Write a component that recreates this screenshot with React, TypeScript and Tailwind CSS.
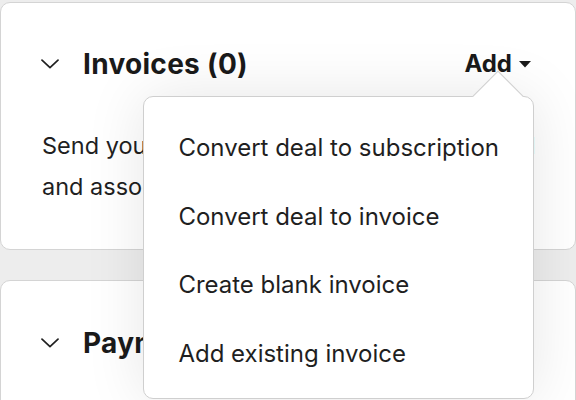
import React from 'react';

const MENU_ITEMS = [
  'Convert deal to subscription',
  'Convert deal to invoice',
  'Create blank invoice',
  'Add existing invoice',
];

function Chevron() {
  return (
    <svg width="18" height="10" viewBox="0 0 18 10" fill="none" className="shrink-0">
      <path d="M1 1.2 L9 8.6 L17 1.2" stroke="#1f1f1f" strokeWidth="1.7" strokeLinecap="round" strokeLinejoin="round" />
    </svg>
  );
}

function AddMenu() {
  return (
    <div className="relative">
      <button className="flex items-center gap-[7px] text-[24px] font-bold text-[#1a1a1a] leading-none">
        Add
        <svg width="12" height="7" viewBox="0 0 12 7">
          <path d="M0 0 H12 L6 6.5 Z" fill="#1a1a1a" />
        </svg>
      </button>

      {/* popover */}
      <div className="absolute left-[-321px] top-[44px] w-[391px] z-10">
        <div className="absolute left-[337px] top-[-18px] w-[36px] h-[36px] rotate-45 bg-white border-l border-t border-[#cfcfcf] z-20" />
        <div className="relative rounded-[10px] border border-[#cfcfcf] bg-white pt-[17px] pb-[10px] shadow-[0_0_60px_rgba(0,0,0,0.10)]">
          <ul className="relative z-30">
            {MENU_ITEMS.map((item) => (
              <li key={item} className="h-[68.5px] flex items-center pl-[34px] text-[24px] text-[#1f1f1f] whitespace-nowrap">
                {item}
              </li>
            ))}
          </ul>
        </div>
      </div>
    </div>
  );
}

export default function App() {
  return (
    <div
      className="h-[400px] w-[576px] overflow-hidden bg-[#ededed] pt-[2px]"
      style={{ fontFamily: 'Inter, "Noto Sans", sans-serif' }}
    >
      <section className="h-[248px] rounded-[10px] border border-[#d4d4d4] bg-white">
        <div className="flex items-center justify-between h-[122px] pl-[40px] pr-[44px]">
          <div className="flex items-center gap-[24px]">
            <Chevron />
            <h2 className="text-[28px] font-bold text-[#1a1a1a] tracking-[0.3px]">Invoices (0)</h2>
          </div>
          <AddMenu />
        </div>
        <p className="pl-[41px] text-[23.5px] leading-[41px] text-[#1f1f1f] whitespace-nowrap">
          Send your customers an invoice for this deal
          <br />
          and associate it with a payment.
        </p>
      </section>

      <section className="mt-[30px] h-[200px] rounded-[10px] border border-[#d4d4d4] bg-white">
        <div className="flex items-center h-[124px] pl-[40px]">
          <div className="flex items-center gap-[24px]">
            <Chevron />
            <h2 className="text-[28px] font-bold text-[#1a1a1a] tracking-[0.3px]">Payments (0)</h2>
          </div>
        </div>
      </section>
    </div>
  );
}
